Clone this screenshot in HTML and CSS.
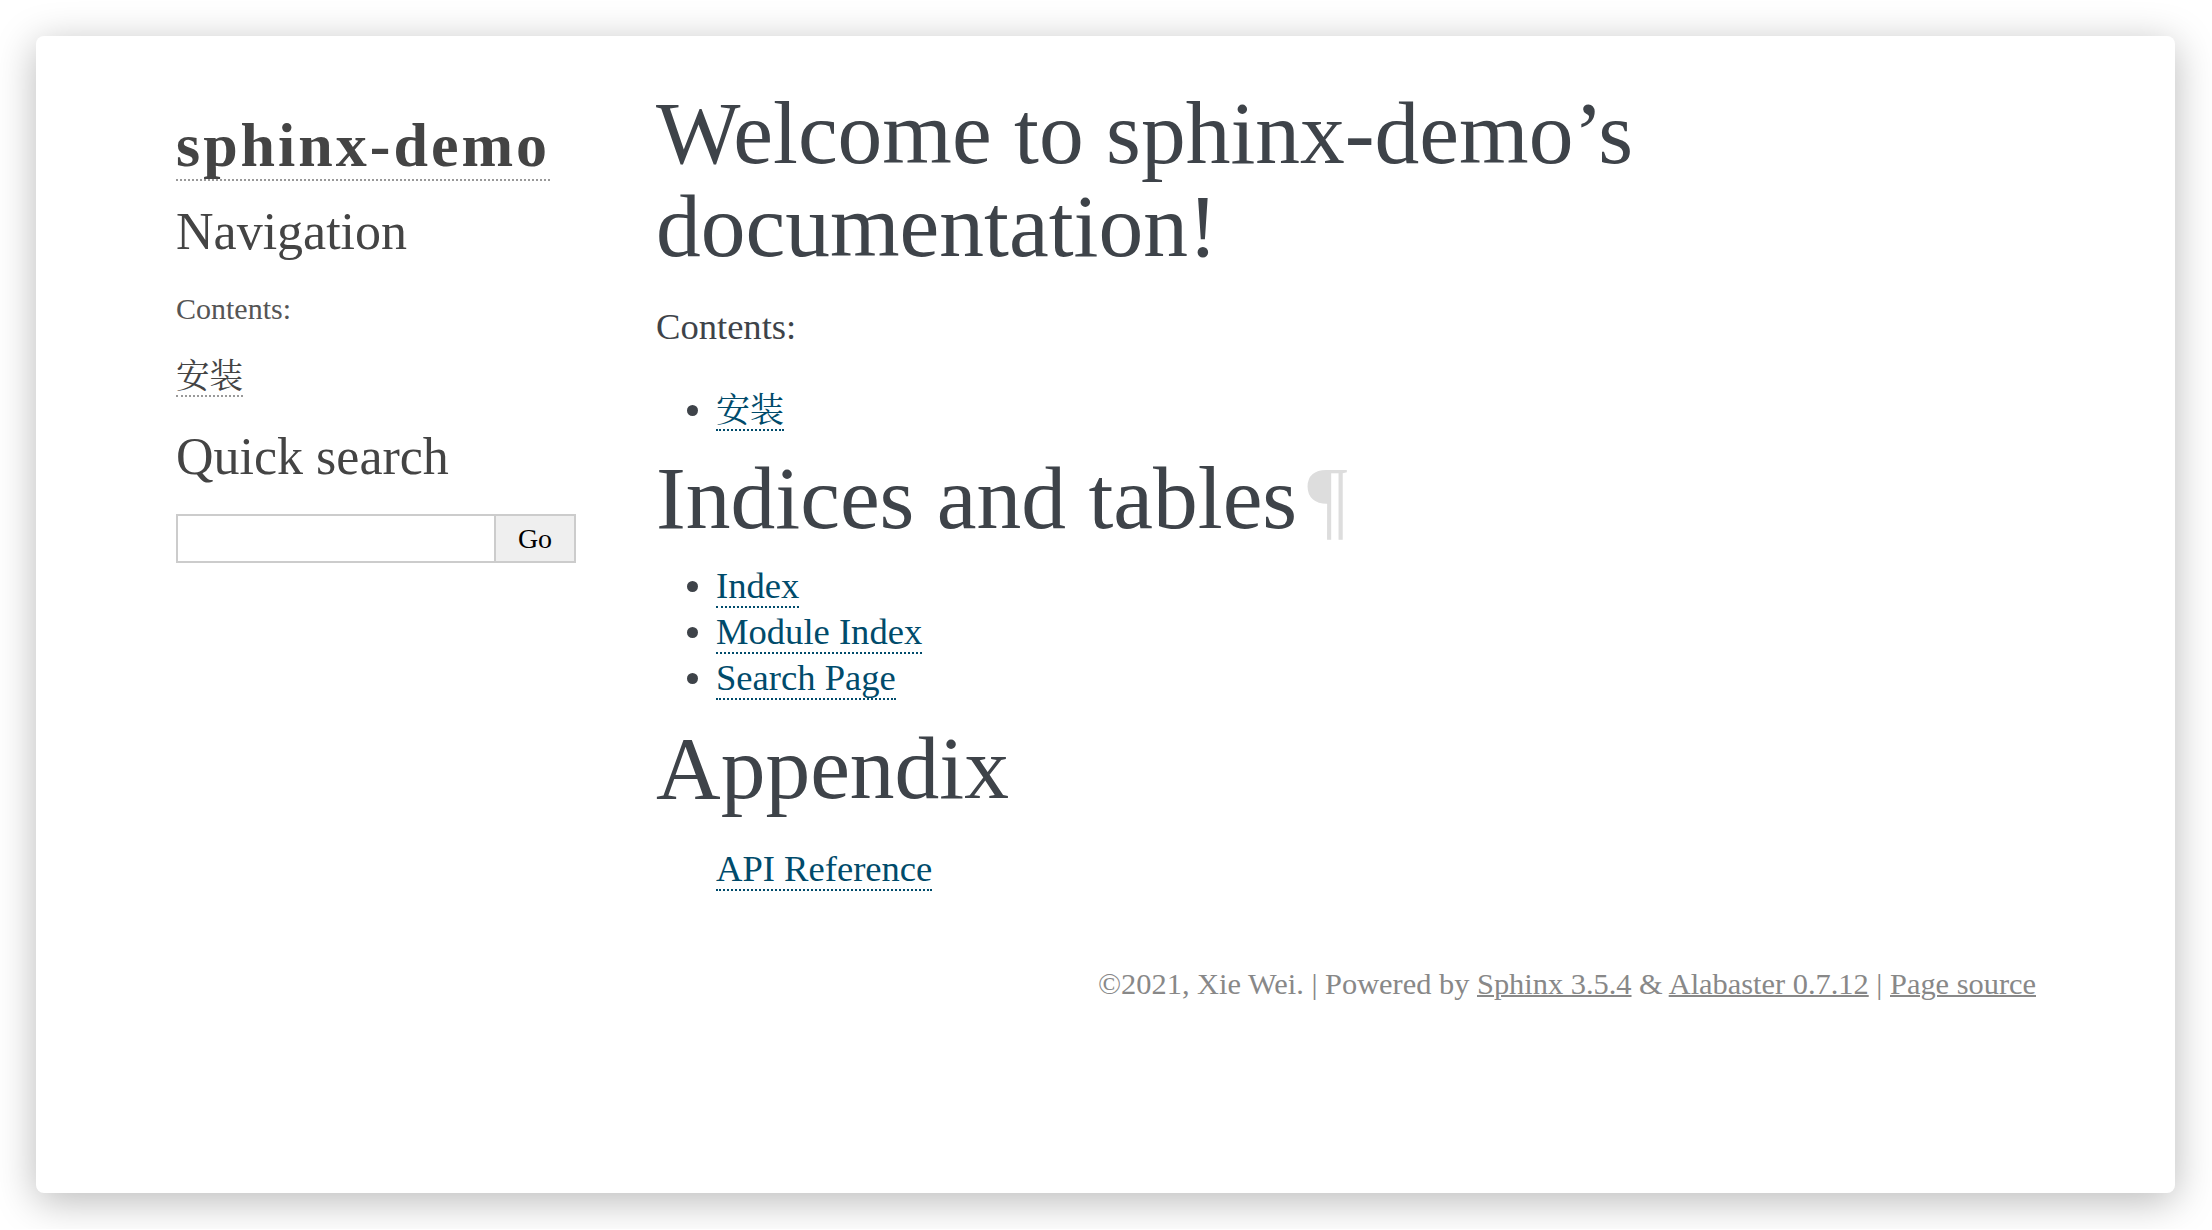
FILE: index.html
```html
<!DOCTYPE html>
<html lang="zh">
<head>
<meta charset="utf-8">
<title>Welcome to sphinx-demo’s documentation!</title>
<link rel="stylesheet" href="styles.css">
</head>
<body>
<div class="window">
  <div class="document">
    <aside class="sidebar">
      <h1 class="logo"><a href="#">sphinx-demo</a></h1>
      <h3 class="side-h nav-h">Navigation</h3>
      <p class="caption">Contents:</p>
      <ul class="side-toc"><li><a href="#">安装</a></li></ul>
      <h3 class="side-h search-h">Quick search</h3>
      <form class="search">
        <input type="text" class="search-input" aria-label="search">
        <input type="submit" class="search-go" value="Go">
      </form>
    </aside>
    <main class="body">
      <h1 class="title">Welcome to sphinx-demo’s documentation!</h1>
      <p class="contents">Contents:</p>
      <ul class="toc toc-first"><li><a class="ref cjk" href="#">安装</a></li></ul>
      <h1 class="title title-indices">Indices and tables<a class="headerlink" href="#">¶</a></h1>
      <ul class="toc toc-indices">
        <li><a class="ref" href="#">Index</a></li>
        <li><a class="ref" href="#">Module Index</a></li>
        <li><a class="ref" href="#">Search Page</a></li>
      </ul>
      <h1 class="title title-appendix">Appendix</h1>
      <ul class="toc toc-plain"><li><a class="ref" href="#">API Reference</a></li></ul>
    </main>
  </div>
  <div class="footer">©2021, Xie Wei. | Powered by <a href="#">Sphinx 3.5.4</a> &amp; <a href="#">Alabaster 0.7.12</a> | <a href="#">Page source</a></div>
</div>
</body>
</html>
```
FILE: styles.css
```css
* { box-sizing: border-box; }

html, body {
  margin: 0;
  padding: 0;
  background: #ffffff;
}

body {
  font-family: "Liberation Serif", "Noto Serif CJK SC", "Noto Sans CJK SC", serif;
  color: #3E4349;
}

.window {
  margin: 36px;
  width: 2139px;
  height: 1157px;
  background: #ffffff;
  border-radius: 8px;
  box-shadow: 0 8px 40px rgba(0, 0, 0, 0.28);
  padding: 50px 0 0 120px;
}

.document {
  display: flex;
  align-items: flex-start;
  width: 1880px;
}

/* ---------- sidebar ---------- */
.sidebar {
  flex: none;
  width: 440px;
  padding: 17px 20px 0 20px;
  color: #444;
}

.logo {
  margin: 0;
  font-size: 62px;
  line-height: 84px;
  font-weight: bold;
  letter-spacing: 3px;
}

.logo a {
  color: #444;
  text-decoration: none;
  border-bottom: 2px dotted #999;
}

.side-h {
  margin: 0;
  font-size: 52px;
  line-height: 72px;
  font-weight: normal;
  color: #444;
}

.nav-h { margin-top: 9px; }
.search-h { margin-top: 19.5px; }

.caption {
  margin: 20px 0 0 0;
  font-size: 30px;
  line-height: 42px;
  color: #555;
}

.side-toc {
  list-style: none;
  margin: 23px 0 0 0;
  padding: 0;
  font-size: 33.6px;
  line-height: 48px;
}

.side-toc a {
  color: #444;
  text-decoration: none;
  border-bottom: 2px dotted #999;
}

.search {
  display: flex;
  margin: 21.5px 0 0 0;
  width: 400px;
  height: 49px;
}

.search-input {
  appearance: none;
  width: 320px;
  height: 49px;
  margin: 0;
  padding: 0 8px;
  border: 2px solid #ccc;
  background: #fff;
  font-family: "Liberation Serif", serif;
  font-size: 28px;
}

.search-go {
  appearance: none;
  width: 80px;
  height: 49px;
  margin: 0;
  padding: 0;
  border: 2px solid #ccc;
  border-left: none;
  background: #efefef;
  color: #000;
  font-family: "Liberation Serif", serif;
  font-size: 28px;
  line-height: 45px;
  text-align: center;
}

/* ---------- body ---------- */
.body {
  flex: 1;
  padding: 0 60px;
}

.title {
  margin: 0;
  font-size: 89.5px;
  line-height: 93px;
  font-weight: normal;
  color: #3E4349;
}

.title-indices { margin-top: 17px; }
.title-appendix { margin-top: 20px; }

.contents {
  margin: 31px 0 0 0;
  font-size: 36.6px;
  line-height: 48px;
}

.toc {
  margin: 0 0 0 60px;
  padding: 0;
  font-size: 36.6px;
  line-height: 46px;
  list-style: disc;
}

.toc-first { margin-top: 36px; }
.toc-indices { margin-top: 19px; }
.toc-plain { margin-top: 32px; list-style: none; }

.ref {
  color: #004B6B;
  text-decoration: none;
  border-bottom: 2px dotted #004B6B;
}

.cjk { font-size: 34px; }

.headerlink {
  color: #DDD;
  padding: 0 10px;
  text-decoration: none;
}

/* ---------- footer ---------- */
.footer {
  width: 1880px;
  margin-top: 72px;
  text-align: right;
  font-size: 30.4px;
  line-height: 40px;
  color: #888;
}

.footer a {
  color: #888;
  text-decoration: underline;
  text-decoration-thickness: 2px;
}
```
